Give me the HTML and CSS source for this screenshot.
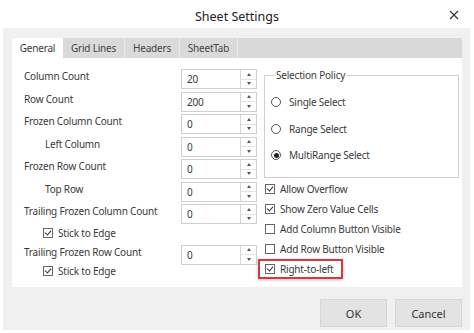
FILE: index.html
```html
<!DOCTYPE html>
<html>
<head>
<meta charset="utf-8">
<link rel="stylesheet" href="styles.css">
</head>
<body>
<div class="dialog">
  <header class="titlebar">
    <span class="title">Sheet Settings</span>
    <span class="close"><svg width="10" height="10" viewBox="0 0 10 10"><path d="M1 1L9 9M9 1L1 9" stroke="#333" stroke-width="1.1" fill="none"/></svg></span>
  </header>
  <div class="body">
    <div class="tabs">
      <div class="tab active">General</div>
      <div class="tab">Grid Lines</div>
      <div class="tab">Headers</div>
      <div class="tab">SheetTab</div>
    </div>
    <div class="panel">
      <div class="left">
        <div class="row"><span class="lbl">Column Count</span><div class="spin"><span class="val">20</span><span class="arrows"><i class="up"></i><i class="down"></i></span></div></div>
        <div class="row"><span class="lbl">Row Count</span><div class="spin"><span class="val">200</span><span class="arrows"><i class="up"></i><i class="down"></i></span></div></div>
        <div class="row"><span class="lbl">Frozen Column Count</span><div class="spin"><span class="val">0</span><span class="arrows"><i class="up"></i><i class="down"></i></span></div></div>
        <div class="row"><span class="lbl sub">Left Column</span><div class="spin"><span class="val">0</span><span class="arrows"><i class="up"></i><i class="down"></i></span></div></div>
        <div class="row"><span class="lbl">Frozen Row Count</span><div class="spin"><span class="val">0</span><span class="arrows"><i class="up"></i><i class="down"></i></span></div></div>
        <div class="row"><span class="lbl sub">Top Row</span><div class="spin"><span class="val">0</span><span class="arrows"><i class="up"></i><i class="down"></i></span></div></div>
        <div class="row"><span class="lbl">Trailing Frozen Column Count</span><div class="spin"><span class="val">0</span><span class="arrows"><i class="up"></i><i class="down"></i></span></div></div>
        <div class="check stick"><span class="cb on"></span>Stick to Edge</div>
        <div class="row gap"><span class="lbl">Trailing Frozen Row Count</span><div class="spin"><span class="val">0</span><span class="arrows"><i class="up"></i><i class="down"></i></span></div></div>
        <div class="check stick"><span class="cb on"></span>Stick to Edge</div>
      </div>
      <div class="right">
        <fieldset class="policy">
          <legend>Selection Policy</legend>
          <div class="radio"><span class="rb"></span>Single Select</div>
          <div class="radio"><span class="rb"></span>Range Select</div>
          <div class="radio"><span class="rb on"></span>MultiRange Select</div>
        </fieldset>
        <div class="checks">
          <div class="check"><span class="cb on"></span>Allow Overflow</div>
          <div class="check"><span class="cb on"></span>Show Zero Value Cells</div>
          <div class="check"><span class="cb"></span>Add Column Button Visible</div>
          <div class="check"><span class="cb"></span>Add Row Button Visible</div>
          <div class="check highlight"><span class="cb on"></span>Right-to-left</div>
        </div>
      </div>
    </div>
    <div class="buttons">
      <button class="btn">OK</button>
      <button class="btn">Cancel</button>
    </div>
  </div>
</div>
</body>
</html>
```

FILE: styles.css
```css
* { box-sizing: border-box; }
html, body { margin: 0; padding: 0; background: #fff; }
body {
  width: 474px;
  height: 333px;
  overflow: hidden;
  font-family: "Noto Sans", "Open Sans", sans-serif;
  font-size: 10px;
  letter-spacing: -0.2px;
  color: #3a3a3a;
}
.dialog { width: 474px; height: 333px; background: #fff; }
.titlebar {
  height: 28px;
  display: flex;
  align-items: center;
  justify-content: center;
  position: relative;
}
.title { font-size: 12.5px; color: #222; letter-spacing: 0; padding-top: 4px; }
.close { position: absolute; right: 15px; top: 10px; width: 10px; height: 10px; display: flex; }
.body {
  margin-left: 3px;
  width: 467px;
  height: 302px;
  background: #f0f0f0;
  padding: 10px 8px 0 9px;
}
.tabs {
  display: flex;
  height: 20px;
  background: #d9d9d9;
}
.tab {
  height: 20px;
  line-height: 20px;
  padding: 0;
  text-align: center;
  white-space: nowrap;
  color: #444;
  border-right: 1px solid #e9e9e9;
  background: #dadada;
}
.tab:nth-child(1) { width: 51px; }
.tab:nth-child(2) { width: 62px; }
.tab:nth-child(3) { width: 55px; }
.tab:nth-child(4) { width: 58px; }
.tab.active { background: #fff; border-right: none; color: #3a3a3a; }
.panel {
  height: 229px;
  background: #fff;
  display: flex;
  padding: 11px 3px 0 12px;
  gap: 7px;
}
.left { width: 233px; display: flex; flex-direction: column; }
.row {
  display: flex;
  height: 20px;
  margin-bottom: 2.5px;
}
.row.gap { margin-top: 4px; margin-bottom: 0; }
.lbl { width: 157px; line-height: 14px; white-space: nowrap; }
.lbl.sub { padding-left: 21px; }
.spin {
  width: 76px;
  height: 20px;
  border: 1px solid #cfcfcf;
  display: flex;
  background: #fff;
}
.val { flex: 1; line-height: 18px; padding-left: 5px; }
.arrows {
  width: 16px;
  border-left: 1px solid #d6d6d6;
  display: flex;
  flex-direction: column;
}
.arrows i {
  flex: 1;
  display: flex;
  align-items: center;
  justify-content: center;
}
.arrows i.up { border-bottom: 1px solid #e4e4e4; }
.arrows i::after {
  content: "";
  width: 0; height: 0;
  border-left: 2.5px solid transparent;
  border-right: 2.5px solid transparent;
}
.arrows i.up::after { border-bottom: 3px solid #555; }
.arrows i.down::after { border-top: 3px solid #555; }

.check {
  display: flex;
  align-items: center;
  height: 20px;
  white-space: nowrap;
}
.check.stick { height: 15px; padding-left: 19px; margin-top: -1px; }
.cb {
  width: 10px;
  height: 10px;
  border: 1px solid #666;
  margin-right: 5px;
  position: relative;
  flex: none;
}
.cb.on::after {
  content: "";
  position: absolute;
  left: 2.2px;
  top: 0.3px;
  width: 3px;
  height: 5px;
  border-right: 1px solid #333;
  border-bottom: 1px solid #333;
  transform: rotate(40deg);
}
.right { width: 195px; display: flex; flex-direction: column; }
.policy {
  margin: 0;
  padding: 8px 0 7px 6px;
  border: 1px solid #d0d0d0;
  height: 109px;
}
.policy legend {
  margin-left: 4px;
  padding: 0 1px;
  line-height: 12px;
}
.radio {
  display: flex;
  align-items: center;
  height: 26.5px;
}
.rb {
  width: 10px;
  height: 10px;
  border: 1px solid #555;
  border-radius: 50%;
  margin-right: 8px;
  position: relative;
}
.rb.on::after {
  content: "";
  position: absolute;
  left: 1.5px; top: 1.5px;
  width: 5px; height: 5px;
  border-radius: 50%;
  background: #222;
}
.checks { padding-left: 1px; margin-top: 1px; display: flex; flex-direction: column; align-items: flex-start; }
.check.highlight {
  margin-left: -7px;
  padding: 0 5px 0 5px;
  border: 2px solid #d9363e;
  box-shadow: 0 1px 3px rgba(0,0,0,0.25);
  width: 85px;
}
.buttons {
  display: flex;
  justify-content: flex-end;
  gap: 8px;
  margin-top: 12px;
}
.btn {
  width: 67px;
  height: 28px;
  background: #e3e3e3;
  border: 1px solid #d6d6d6;
  font-family: inherit;
  font-size: 11px;
  color: #333;
  padding: 0;
}
```
